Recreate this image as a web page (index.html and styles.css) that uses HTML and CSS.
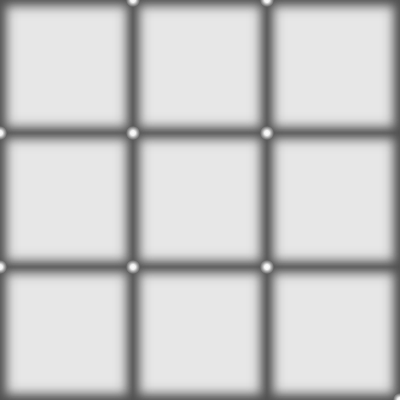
FILE: index.html
```html
<!DOCTYPE html>
<html>
<head>
<meta charset="utf-8">
<link rel="stylesheet" href="styles.css">
</head>
<body>
<div class="board">
  <div class="grid">
    <div class="tile"></div><div class="tile"></div><div class="tile"></div>
    <div class="tile"></div><div class="tile"></div><div class="tile"></div>
    <div class="tile"></div><div class="tile"></div><div class="tile"></div>
  </div>
  <span class="dot d1"></span><span class="dot d2"></span>
  <span class="dot d3"></span><span class="dot d4"></span><span class="dot d5"></span>
  <span class="dot d6"></span><span class="dot d7"></span><span class="dot d8"></span>
  <span class="dot d9"></span>
</div>
</body>
</html>
```
FILE: styles.css
```css
html, body {
  margin: 0;
  padding: 0;
  background: #5a5a5a;
}
.board {
  position: relative;
  width: 400px;
  height: 400px;
  overflow: hidden;
}
.grid {
  display: grid;
  grid-template-columns: repeat(3, 1fr);
  grid-template-rows: repeat(3, 1fr);
  width: 400px;
  height: 400px;
}
.tile {
  background: #e7e7e7;
  box-shadow:
    inset 7px 0 13px -2px #4f4f4f,
    inset -7px 0 13px -2px #4f4f4f,
    inset 0 7px 13px -2px #6a6a6a,
    inset 0 -7px 13px -2px #6a6a6a;
}
.dot {
  position: absolute;
  width: 14px;
  height: 14px;
  margin: -7px 0 0 -7px;
  border-radius: 50%;
  background: radial-gradient(circle, #ffffff 0, #f2f2f2 25%, rgba(220,220,220,0.5) 50%, rgba(200,200,200,0) 72%);
}
.d1 { left: 133px; top: 0; }
.d2 { left: 267px; top: 0; }
.d3 { left: 0; top: 133px; }
.d4 { left: 133px; top: 133px; }
.d5 { left: 267px; top: 133px; }
.d6 { left: 0; top: 267px; }
.d7 { left: 133px; top: 267px; }
.d8 { left: 267px; top: 267px; }
.d9 { left: 400px; top: 400px; }
```
